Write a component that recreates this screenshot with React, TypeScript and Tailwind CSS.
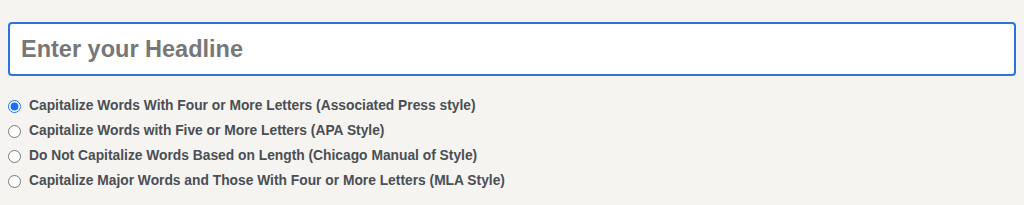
import { useState } from "react";

const options = [
  "Capitalize Words With Four or More Letters (Associated Press style)",
  "Capitalize Words with Five or More Letters (APA Style)",
  "Do Not Capitalize Words Based on Length (Chicago Manual of Style)",
  "Capitalize Major Words and Those With Four or More Letters (MLA Style)",
];

export default function App() {
  const [style, setStyle] = useState(0);
  const [headline, setHeadline] = useState("");

  return (
    <div className="w-[1024px] h-[205px] bg-[#f5f4f0] px-2 pt-[22px] font-['Liberation_Sans',Arial,sans-serif]">
      <input
        type="text"
        value={headline}
        onChange={(e) => setHeadline(e.target.value)}
        placeholder="Enter your Headline"
        className="w-full h-[54px] bg-white border-2 border-[#2b74d9] rounded-[4px] px-[11px] text-[23.5px] font-bold text-[#333] placeholder:text-[#777] outline-none"
      />
      <div className="flex flex-col mt-[18px]">
        {options.map((label, i) => (
          <label key={i} className="flex items-center h-[25px] gap-2 cursor-pointer">
            <input
              type="radio"
              name="style"
              checked={style === i}
              onChange={() => setStyle(i)}
              className="m-0 w-[13px] h-[13px] accent-[#1a6ff5]"
            />
            <span className="text-[13.8px] font-bold text-[#4a4e55]">{label}</span>
          </label>
        ))}
      </div>
    </div>
  );
}
